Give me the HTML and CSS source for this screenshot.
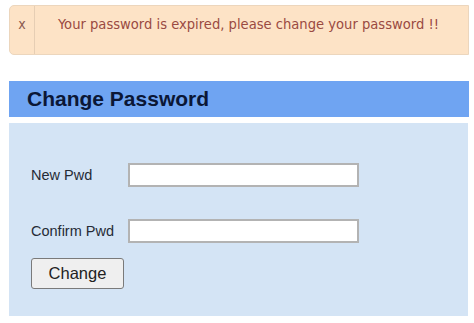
FILE: index.html
```html
<!doctype html>
<html>
  <head>
    <meta charset="utf-8">
    <title>Change Password</title>
    <link rel="stylesheet" href="styles.css">
  </head>
  <body>
    <div id="wrapper">
      <div class="alert">
        <span class="alert-close">x</span>
        <span class="alert-text">Your password is expired, please change your password !!</span>
      </div>

      <div class="box">
        <h1 class="box-title">Change Password</h1>
        <form class="box-body">
          <div class="field">
            <label for="new-pwd">New Pwd</label>
            <input type="password" id="new-pwd">
          </div>
          <div class="field">
            <label for="confirm-pwd">Confirm Pwd</label>
            <input type="password" id="confirm-pwd">
          </div>
          <button type="button" class="btn">Change</button>
        </form>
      </div>
    </div>
  </body>
</html>
```

FILE: styles.css
```css
body {
  margin: 0;
  background: #ffffff;
  font-family: "Liberation Sans", Arial, sans-serif;
}

#wrapper {
  padding: 5px 5px 0 9px;
}

.alert {
  display: flex;
  height: 50px;
  box-sizing: border-box;
  background: #fde3c6;
  border: 1px solid #ecd6bd;
  border-radius: 5px 0 0 5px;
  color: #9a4a42;
  font-family: "DejaVu Sans Condensed", "DejaVu Sans", Tahoma, sans-serif;
}

.alert-close {
  width: 24px;
  padding-top: 10px;
  text-align: center;
  border-right: 1px solid #e6ceb4;
  color: #8a5a50;
  font-size: 14px;
}

.alert-text {
  flex: 1;
  padding-top: 9px;
  padding-right: 6px;
  text-align: center;
  font-size: 14.6px;
}

.box {
  margin-top: 26px;
}

.box-title {
  margin: 0;
  height: 36px;
  line-height: 36px;
  padding-left: 18px;
  background: #6fa4f2;
  color: #0b1736;
  font-size: 21px;
  font-weight: bold;
}

.box-body {
  margin: 6px 1px 0 0;
  height: 193px;
  box-sizing: border-box;
  padding: 40px 0 0 22px;
  background: #d4e4f5;
}

.field {
  display: flex;
  align-items: center;
  margin-bottom: 32px;
}

.field:nth-child(2) {
  margin-bottom: 15px;
}

.field label {
  width: 97px;
  font-size: 14.5px;
  color: #262b36;
}

.field input {
  width: 231px;
  height: 24px;
  box-sizing: border-box;
  border: 2px solid #b3b3b3;
  background: #ffffff;
  margin: 0;
}

.btn {
  width: 93px;
  height: 31px;
  border: 1px solid #7a7a7a;
  border-radius: 3px;
  background: #efefef;
  font-family: "Liberation Sans", Arial, sans-serif;
  font-size: 16.5px;
  color: #222222;
}
```
